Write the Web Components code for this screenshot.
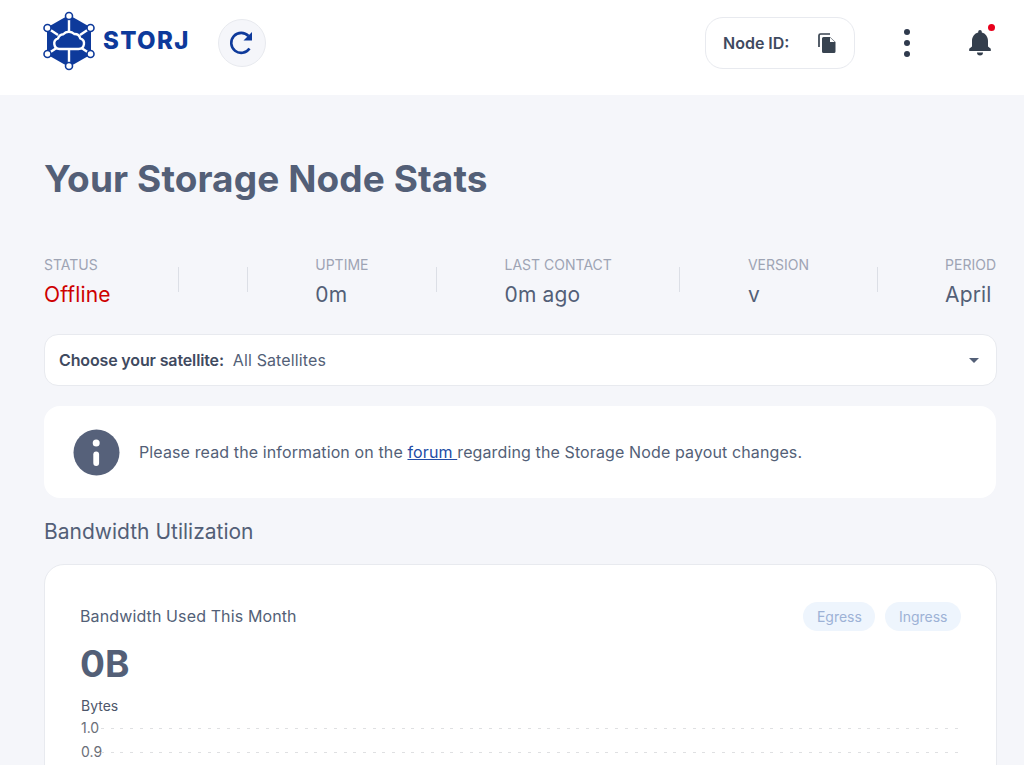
<!DOCTYPE html>
<html lang="en">
<head>
<meta charset="utf-8">
<title>Storj Node Dashboard</title>
<style>
    html, body { margin: 0; height: 765px; overflow: hidden; }
    body { background: #f5f6fa; font-family: Inter, "Noto Sans", sans-serif; color: #535f77; }
</style>
</head>
<body>
<sno-header></sno-header>
<sno-content>
    <page-title>Your Storage Node Stats</page-title>
    <status-bar>
        <stat-item label="STATUS" class="offline">Offline</stat-item>
        <stat-sep></stat-sep>
        <stat-sep></stat-sep>
        <stat-item label="UPTIME">0m</stat-item>
        <stat-sep></stat-sep>
        <stat-item label="LAST CONTACT">0m ago</stat-item>
        <stat-sep></stat-sep>
        <stat-item label="VERSION">v</stat-item>
        <stat-sep></stat-sep>
        <stat-item label="PERIOD">April</stat-item>
    </status-bar>
    <satellite-select>All Satellites</satellite-select>
    <info-note>Please read the information on the <a href="#">forum </a>regarding the Storage Node payout changes.</info-note>
    <section-title>Bandwidth Utilization</section-title>
    <bandwidth-card></bandwidth-card>
</sno-content>

<script>
class StorjLogo extends HTMLElement {
    constructor(){
        super();
        this.attachShadow({mode:'open'});
        this.shadowRoot.innerHTML = `
            <style>
                :host{
                    display: flex;
                    align-items: center;
                    gap: 8px;
                    width: 175px;
                    margin-bottom: 4px;
                }
                svg{
                    display: block;
                    flex: none;
                }
                span{
                    font: 800 24px/1 Inter, sans-serif;
                    letter-spacing: 1.4px;
                    color: #0e3a9b;
                }
            </style>
            <svg width="52" height="60" viewBox="0 0 52 60">
                <polygon points="26,4 48,16.500 48,43.500 26,56 4,43.500 4,16.500" fill="#0e3a9b"/>
                <g stroke="#fff" stroke-width="2.400" fill="none">
                    <path d="M26 5V21M4.500 17L15 24M47.500 17L37 24M26 38V55M4.500 43L15 36M47.500 43L37 36"/>
                    <path d="M16.500 38h19a5.500 5.500 0 0 0 1.800 -10.700a6 6 0 0 0 -6 -4.300a7.500 7.500 0 0 0 -11 0.200a6 6 0 0 0 -5.300 4.100a5.500 5.500 0 0 0 1.500 10.700z" fill="#0e3a9b"/>
                </g>
                <g fill="#fff" stroke="#0e3a9b" stroke-width="1.600">
                    <circle cx="26" cy="5" r="3.500"/>
                    <circle cx="47.500" cy="17" r="3.500"/>
                    <circle cx="47.500" cy="43" r="3.500"/>
                    <circle cx="26" cy="55" r="3.500"/>
                    <circle cx="4.500" cy="43" r="3.500"/>
                    <circle cx="4.500" cy="17" r="3.500"/>
                </g>
            </svg>
            <span>STORJ</span>
        `;
    }
}

class RefreshButton extends HTMLElement {
    constructor(){
        super();
        this.attachShadow({mode:'open'});
        this.shadowRoot.innerHTML = `
            <style>
                :host{
                    display: flex;
                    align-items: center;
                    justify-content: center;
                    box-sizing: border-box;
                    width: 48px;
                    height: 48px;
                    border: 1px solid #e8eaef;
                    border-radius: 50%;
                    background: #f5f6fa;
                }
            </style>
            <svg width="26" height="26" viewBox="0 0 26 26" fill="none">
                <path d="M20.500 18.500A10 10 0 1 1 19.500 6" stroke="#0e3a9b" stroke-width="2.600"/>
                <path d="M14.500 10.500h8.500V2z" fill="#0e3a9b"/>
            </svg>
        `;
    }
}

class NodeId extends HTMLElement {
    constructor(){
        super();
        this.attachShadow({mode:'open'});
        this.shadowRoot.innerHTML = `
            <style>
                :host{
                    display: flex;
                    align-items: center;
                    justify-content: space-between;
                    box-sizing: border-box;
                    width: 150px;
                    height: 52px;
                    padding: 0 18px 0 17px;
                    border: 1px solid #e8eaef;
                    border-radius: 18px;
                    font: 600 16px Inter, sans-serif;
                    color: #3f4a5f;
                }
                svg{
                    margin-bottom: 1px;
                }
            </style>
            <span>Node ID:</span>
            <svg width="18" height="20" viewBox="0 0 18 20">
                <path d="M1 14V2.500A1.500 1.500 0 0 1 2.500 1H12" fill="none" stroke="#384350" stroke-width="1.700"/>
                <path d="M4 5.500A1.500 1.500 0 0 1 5.500 4H12l5.500 5v9.500A1.500 1.500 0 0 1 16 20H5.500A1.500 1.500 0 0 1 4 18.500z" fill="#384350"/>
                <path d="M12 4.500V9h4.800z" fill="#fff"/>
            </svg>
        `;
    }
}

class SnoHeader extends HTMLElement {
    constructor(){
        super();
        this.attachShadow({mode:'open'});
        this.shadowRoot.innerHTML = `
            <style>
                :host{
                    display: flex;
                    align-items: center;
                    box-sizing: border-box;
                    height: 95px;
                    padding: 0 32px 9px 43px;
                    background: #fff;
                }
                .right{
                    display: flex;
                    align-items: center;
                    margin-left: auto;
                }
                .dots{
                    display: grid;
                    gap: 5.300px;
                    margin: 0 58px 0 49px;
                }
                .dots i{
                    width: 6px;
                    height: 6px;
                    border-radius: 50%;
                    background: #2f3a4d;
                }
                .bell{
                    position: relative;
                    display: block;
                    margin-bottom: 2px;
                }
                .bell::after{
                    content: '';
                    position: absolute;
                    top: -4px;
                    right: -3px;
                    width: 7px;
                    height: 7px;
                    border-radius: 50%;
                    background: #e8001c;
                }
            </style>
            <storj-logo></storj-logo>
            <refresh-button></refresh-button>
            <div class="right">
                <node-id></node-id>
                <div class="dots"><i></i><i></i><i></i></div>
                <div class="bell">
                    <svg width="24" height="28" viewBox="0 0 24 28" style="display:block">
                        <path d="M12 2a1.800 1.800 0 0 1 1.800 1.800v.8C17.500 5.500 20 8.800 20 13v5.500l2.800 2.300V23H1.200v-2.200L4 18.500V13c0-4.200 2.500-7.500 6.200-8.400v-.8A1.800 1.800 0 0 1 12 2z" fill="#333e4c"/>
                        <path d="M9 24.500h6a3 3 0 0 1 -6 0z" fill="#333e4c"/>
                    </svg>
                </div>
            </div>
        `;
    }
}

class SnoContent extends HTMLElement {
    constructor(){
        super();
        this.attachShadow({mode:'open'});
        this.shadowRoot.innerHTML = `
            <style>
                :host{
                    display: block;
                    padding: 0 27px 0 44px;
                }
            </style>
            <slot></slot>
        `;
    }
}

class PageTitle extends HTMLElement {
    constructor(){
        super();
        this.attachShadow({mode:'open'});
        this.shadowRoot.innerHTML = `
            <style>
                :host{
                    display: block;
                    padding-top: 62px;
                    font: 700 37px/44px Inter, sans-serif;
                    letter-spacing: 0.1px;
                    color: #535f77;
                }
            </style>
            <slot></slot>
        `;
    }
}

class StatusBar extends HTMLElement {
    constructor(){
        super();
        this.attachShadow({mode:'open'});
        this.shadowRoot.innerHTML = `
            <style>
                :host{
                    display: flex;
                    align-items: flex-start;
                    justify-content: space-between;
                    margin-top: 54px;
                    height: 56px;
                    padding-right: 1px;
                }
            </style>
            <slot></slot>
        `;
    }
}

class StatItem extends HTMLElement {
    constructor(){
        super();
        this.attachShadow({mode:'open'});
        this.shadowRoot.innerHTML = `
            <style>
                :host{
                    display: block;
                    font-family: Inter, sans-serif;
                }
                :host(.offline) .value{
                    color: #ce0000;
                }
                .label{
                    font-size: 14px;
                    line-height: 20px;
                    color: #9ea4b4;
                }
                .value{
                    margin-top: 5px;
                    font-size: 21px;
                    line-height: 30px;
                    letter-spacing: 0.15px;
                    color: #535f77;
                }
            </style>
            <div class="label"></div>
            <div class="value"><slot></slot></div>
        `;
    }

    connectedCallback(){
        this.shadowRoot.querySelector('.label').textContent = this.getAttribute('label');
    }
}

class StatSep extends HTMLElement {
    constructor(){
        super();
        this.attachShadow({mode:'open'});
        this.shadowRoot.innerHTML = `
            <style>
                :host{
                    display: block;
                    width: 1px;
                    height: 25px;
                    margin-top: 12px;
                    background: #dcdfe6;
                }
            </style>
        `;
    }
}

class SatelliteSelect extends HTMLElement {
    constructor(){
        super();
        this.attachShadow({mode:'open'});
        this.shadowRoot.innerHTML = `
            <style>
                :host{
                    display: flex;
                    align-items: center;
                    box-sizing: border-box;
                    height: 52px;
                    margin-top: 23px;
                    padding: 0 17px 0 14px;
                    border: 1px solid #e8eaef;
                    border-radius: 14px;
                    background: #fff;
                    font: 16px Inter, sans-serif;
                    letter-spacing: 0.12px;
                    color: #535f77;
                }
                b{
                    font-weight: 600;
                    letter-spacing: -0.14px;
                    color: #3f4a5f;
                    margin-right: 9px;
                }
                i{
                    margin-left: auto;
                    border: 5px solid transparent;
                    border-top: 5px solid #535f77;
                    border-bottom: 0;
                }
            </style>
            <b>Choose your satellite:</b>
            <slot></slot>
            <i></i>
        `;
    }
}

class InfoNote extends HTMLElement {
    constructor(){
        super();
        this.attachShadow({mode:'open'});
        this.shadowRoot.innerHTML = `
            <style>
                :host{
                    display: flex;
                    align-items: center;
                    gap: 19px;
                    box-sizing: border-box;
                    height: 92px;
                    margin: 20px 1px 0 0;
                    padding-left: 29px;
                    border-radius: 16px;
                    background: #fff;
                    font: 16px Inter, sans-serif;
                    letter-spacing: 0.12px;
                    color: #535f77;
                }
                ::slotted(a){
                    color: #224ca5;
                }
                svg{
                    display: block;
                    flex: none;
                }
            </style>
            <svg width="47" height="47" viewBox="0 0 47 47">
                <circle cx="23.500" cy="23.500" r="23" fill="#56617a"/>
                <circle cx="23.200" cy="14" r="3.500" fill="#fff"/>
                <rect x="20.300" y="22.500" width="5.800" height="14.500" rx="2.900" fill="#fff"/>
            </svg>
            <span><slot></slot></span>
        `;
    }
}

class SectionTitle extends HTMLElement {
    constructor(){
        super();
        this.attachShadow({mode:'open'});
        this.shadowRoot.innerHTML = `
            <style>
                :host{
                    display: block;
                    margin-top: 20px;
                    font: 21px/28px Inter, sans-serif;
                    color: #535f77;
                }
            </style>
            <slot></slot>
        `;
    }
}

class ToggleChip extends HTMLElement {
    constructor(){
        super();
        this.attachShadow({mode:'open'});
        this.shadowRoot.innerHTML = `
            <style>
                :host{
                    display: block;
                    height: 29px;
                    padding: 0 13.500px;
                    border-radius: 15px;
                    background: #eef5fd;
                    font: 14px/29px Inter, sans-serif;
                    color: #9db2d6;
                }
            </style>
            <slot></slot>
        `;
    }
}

class AxisRow extends HTMLElement {
    constructor(){
        super();
        this.attachShadow({mode:'open'});
        this.shadowRoot.innerHTML = `
            <style>
                :host{
                    display: flex;
                    align-items: center;
                    height: 24px;
                    font: 14px/1 Inter, sans-serif;
                    color: #6b6f78;
                }
                span{
                    width: 20px;
                    padding-left: 1px;
                    flex: none;
                }
                i{
                    flex: 1;
                    height: 1px;
                    background: repeating-linear-gradient(90deg, #dfe0e2 0 3px, transparent 3px 9.700px);
                }
            </style>
            <span><slot></slot></span>
            <i></i>
        `;
    }
}

class BandwidthCard extends HTMLElement {
    constructor(){
        super();
        this.attachShadow({mode:'open'});
        this.shadowRoot.innerHTML = `
            <style>
                :host{
                    display: block;
                    box-sizing: border-box;
                    margin-top: 18px;
                    height: 420px;
                    padding: 37px 35px 0;
                    border: 1px solid #e8eaef;
                    border-radius: 20px;
                    background: #fff;
                    font-family: Inter, sans-serif;
                }
                .top{
                    display: flex;
                    align-items: center;
                    justify-content: space-between;
                    font-size: 16px;
                    letter-spacing: 0.12px;
                    color: #535f77;
                }
                .top > span{
                    margin-top: -2px;
                }
                .chips{
                    display: flex;
                    gap: 10px;
                    letter-spacing: 0;
                }
                .total{
                    margin-top: 11px;
                    font: 700 37px/44px Inter, sans-serif;
                    color: #535f77;
                }
                .unit{
                    margin: 10px 0 0 1px;
                    font-size: 14px;
                    line-height: 20px;
                    color: #4d566a;
                }
            </style>
            <div class="top">
                <span>Bandwidth Used This Month</span>
                <div class="chips">
                    <toggle-chip>Egress</toggle-chip>
                    <toggle-chip>Ingress</toggle-chip>
                </div>
            </div>
            <div class="total">0B</div>
            <div class="unit">Bytes</div>
            <axis-row>1.0</axis-row>
            <axis-row>0.9</axis-row>
        `;
    }
}

customElements.define('storj-logo', StorjLogo);
customElements.define('refresh-button', RefreshButton);
customElements.define('node-id', NodeId);
customElements.define('sno-header', SnoHeader);
customElements.define('sno-content', SnoContent);
customElements.define('page-title', PageTitle);
customElements.define('status-bar', StatusBar);
customElements.define('stat-item', StatItem);
customElements.define('stat-sep', StatSep);
customElements.define('satellite-select', SatelliteSelect);
customElements.define('info-note', InfoNote);
customElements.define('section-title', SectionTitle);
customElements.define('toggle-chip', ToggleChip);
customElements.define('axis-row', AxisRow);
customElements.define('bandwidth-card', BandwidthCard);
</script>
</body>
</html>
